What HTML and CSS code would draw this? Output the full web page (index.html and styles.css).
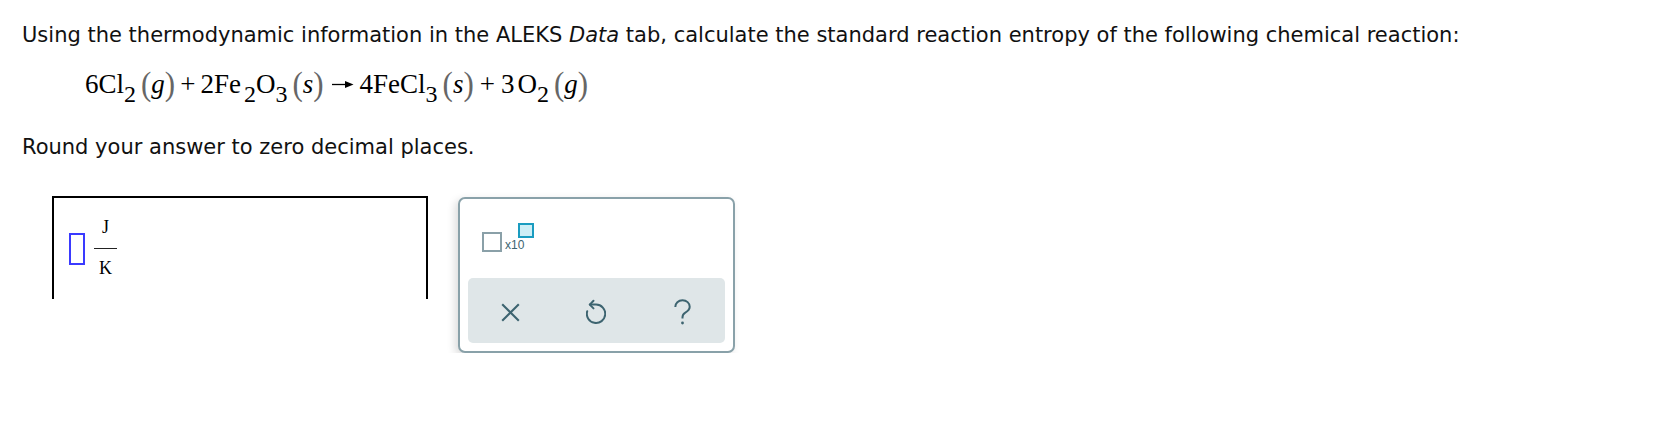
FILE: index.html
```html
<!DOCTYPE html>
<html>
<head>
<meta charset="utf-8">
<link rel="stylesheet" href="styles.css">
</head>
<body>
<main class="q">
  <p class="prompt">Using the thermodynamic information in the ALEKS <i>Data</i> tab, calculate the standard reaction entropy of the following chemical reaction:</p>
  <div class="eq">6Cl<sub>2</sub><span class="sp"></span><span class="pr">(</span><i>g</i><span class="pr">)</span><span class="op">+</span>2Fe<sub class="gap">2</sub>O<sub>3</sub><span class="sp"></span><span class="pr">(</span><i>s</i><span class="pr">)</span><span class="arrow"><svg width="22" height="9" viewBox="0 0 22 9"><path d="M0 4.5H15" stroke="#000" stroke-width="1.3"/><path d="M13 1L21.5 4.5L13 8Z" fill="#000"/></svg></span>4FeCl<sub>3</sub><span class="sp"></span><span class="pr">(</span><i>s</i><span class="pr">)</span><span class="op op2">+</span>3<span class="thin"></span>O<sub>2</sub><span class="sp"></span><span class="pr">(</span><i>g</i><span class="pr">)</span></div>
  <p class="prompt round">Round your answer to zero decimal places.</p>
  <div class="answer">
    <div class="input">
      <div class="input-row">
        <span class="slot"></span>
        <span class="frac"><span class="num">J</span><span class="bar"></span><span class="den">K</span></span>
      </div>
    </div>
    <div class="keypad">
      <div class="kp-top">
        <div class="sci">
          <span class="base-box"></span>
          <span class="x10">x10</span>
          <span class="sup-box"></span>
        </div>
      </div>
      <div class="kp-panel">
        <span class="kp-btn"><svg width="19" height="19" viewBox="0 0 19 19"><path d="M1.2 1.2L17.8 17.8M17.8 1.2L1.2 17.8" stroke="#3d6470" stroke-width="2.1" fill="none"/></svg></span>
        <span class="kp-btn"><svg width="20" height="26" viewBox="0 0 20 26"><path d="M7.5 1.8L3.8 5.6L7.5 9.4" stroke="#3d6470" stroke-width="2" fill="none" stroke-linecap="round" stroke-linejoin="round"/><path d="M3.8 5.6H10A9.2 9.2 0 1 1 1.2 12.3" stroke="#3d6470" stroke-width="2" fill="none" stroke-linecap="round"/></svg></span>
        <span class="kp-btn"><svg width="19" height="26" viewBox="0 0 19 26"><path d="M2.3 8C2.3 4 5.3 1.3 9.5 1.3C13.6 1.3 16.7 4 16.7 7.8C16.7 11 14.3 12.5 12 13.8C10.3 14.8 9.5 16 9.5 18.2V19.6" stroke="#3d6470" stroke-width="2" fill="none"/><circle cx="9.5" cy="24" r="1.4" fill="#3d6470"/></svg></span>
      </div>
    </div>
  </div>
</main>
</body>
</html>
```

FILE: styles.css
```css
html, body {
  margin: 0;
  padding: 0;
  background: #fff;
}

.q {
  padding: 23px 0 0 22px;
  color: #111;
}

.prompt {
  margin: 0;
  font-family: "DejaVu Sans", Verdana, sans-serif;
  font-size: 21px;
  line-height: 24px;
  white-space: nowrap;
}

.eq {
  margin: 19px 0 0 63px;
  font-family: "Liberation Serif", "Times New Roman", serif;
  font-size: 27px;
  line-height: 36px;
  height: 36px;
  color: #000;
  white-space: nowrap;
}

.eq sub {
  font-size: 24px;
  line-height: 0;
  vertical-align: -9px;
}

.eq sub.gap {
  margin-left: 3px;
}

.eq i {
  font-style: italic;
}

.eq .pr {
  display: inline-block;
  color: #666;
  font-size: 31px;
  line-height: 0;
  vertical-align: -1px;
  transform: scaleY(1.08);
}

.eq .sp {
  display: inline-block;
  width: 5px;
}

.eq .thin {
  display: inline-block;
  width: 3px;
}

.eq .op {
  margin: 0 5px;
}

.eq .op2 {
  margin: 0 6px;
}

.eq .arrow {
  display: inline-block;
  margin: 0 6px 0 8px;
  vertical-align: 4px;
  line-height: 0;
}

.round {
  margin-top: 33px;
}

.answer {
  display: flex;
  align-items: flex-start;
  margin-top: 37px;
}

.input {
  box-sizing: border-box;
  width: 376px;
  height: 103px;
  margin-left: 30px;
  border: 2px solid #000;
  border-bottom: none;
}

.input-row {
  display: flex;
  align-items: flex-start;
  padding: 20px 0 0 15px;
}

.slot {
  box-sizing: border-box;
  width: 16px;
  height: 32px;
  margin-top: 15px;
  border: 2px solid #3a3aff;
}

.frac {
  display: flex;
  flex-direction: column;
  align-items: center;
  width: 23px;
  margin-left: 9px;
  font-family: "Liberation Serif", "Times New Roman", serif;
  font-size: 18px;
  line-height: 18px;
  color: #000;
}

.frac .bar {
  width: 23px;
  height: 1px;
  margin: 12px 0 10px;
  background: #222;
}

.keypad {
  box-sizing: border-box;
  width: 277px;
  height: 156px;
  margin: 1px 0 0 30px;
  border: 2px solid #89a1a9;
  border-radius: 7px;
  background: #fff;
  box-shadow: -3px 3px 9px rgba(0, 0, 0, 0.14);
}

.kp-top {
  box-sizing: border-box;
  height: 79px;
  padding: 24px 0 0 22px;
}

.sci {
  display: flex;
  align-items: flex-start;
}

.base-box {
  box-sizing: border-box;
  width: 20px;
  height: 20px;
  margin-top: 9px;
  border: 2px solid #8aa0a8;
}

.x10 {
  margin: 15px 0 0 3px;
  font-family: "Liberation Sans", Arial, sans-serif;
  font-size: 12px;
  line-height: 14px;
  color: #3d6470;
}

.sup-box {
  box-sizing: border-box;
  width: 16px;
  height: 15px;
  margin-left: -6px;
  border: 2px solid #1a9cc0;
  background: #cdeef6;
}

.kp-panel {
  display: grid;
  grid-template-columns: 1fr 1fr 1fr;
  align-items: center;
  justify-items: center;
  height: 65px;
  margin: 0 8px 8px;
  border-radius: 5px;
  background: #dfe6e8;
}

.kp-btn {
  display: flex;
  padding-top: 3px;
}
```
